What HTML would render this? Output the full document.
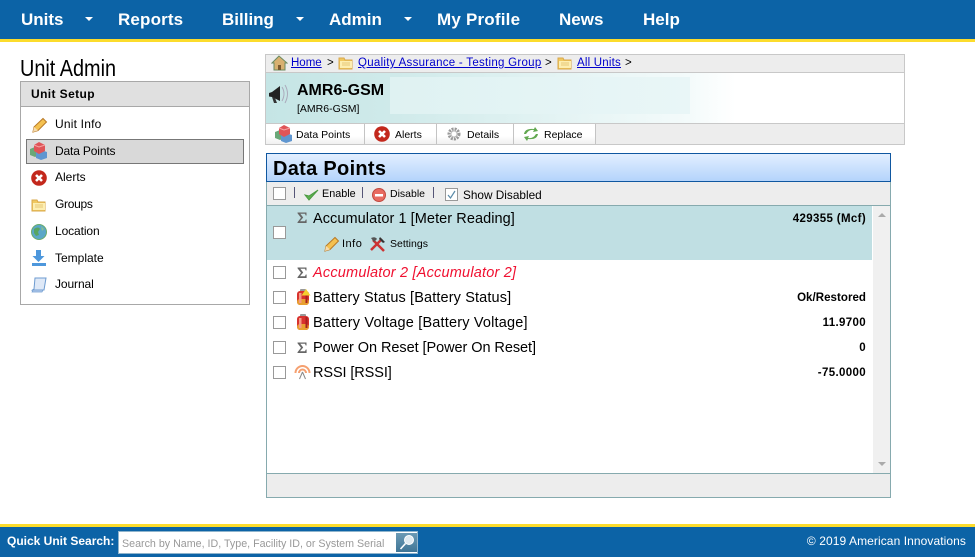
<!DOCTYPE html>
<html><head><meta charset="utf-8"><title>Unit Admin</title>
<style>
html,body{margin:0;padding:0;background:#fff}
#p{position:relative;width:975px;height:557px;overflow:hidden;font-family:"Liberation Sans",sans-serif;color:#000;background:#fff}
#p div,#p span.t,#p svg,#p a{position:absolute}
.t{white-space:nowrap;display:block}
.nav{color:#fff;font-weight:bold;font-size:17px;top:10px;line-height:20px}
.car{width:0;height:0;border-left:4px solid transparent;border-right:4px solid transparent;border-top:4px solid #fff;top:17px}
.side{font-size:12px;left:55px;line-height:14px}
.box{box-sizing:border-box}
.cb{width:13px;height:13px;box-sizing:border-box;border:1px solid #999;background:#fff;left:273px}
.name{font-size:14.5px;left:313px;line-height:18px}
.val{font-size:11.5px;font-weight:bold;line-height:14px;right:109px;letter-spacing:.35px}
a{color:#00c;text-decoration:underline;font-size:11.5px;line-height:14px;white-space:nowrap}
.tab{font-size:10.5px;line-height:14px;top:127px}
.sep{width:1px;background:#c4c4c4;top:124px;height:20px}
</style></head><body><div id="p">

<svg width="0" height="0" style="position:absolute"><defs>
<g id="folder"><path d="M1 3h5l1 2h7v9H1z" fill="#f0c860" stroke="#d9a84a"/><path d="M2 6h12v7H2z" fill="#fdeeb0"/><path d="M4 8h8M4 10h8" stroke="#e8c878" stroke-width="1"/></g>
<g id="x"><circle cx="8" cy="8" r="7.8" fill="#c3281c"/><path d="M5 5l6 6M11 5l-6 6" stroke="#fff" stroke-width="2.6"/></g>
<g id="cubes"><path d="M0 7l5-2 5 2v6l-5 2-5-2z" fill="#6aa878"/><path d="M6 10l5-2 6 2v6l-6 2-5-2z" fill="#5f96d0"/><path d="M4 3l5-3 6 3v6l-6 3-5-3z" fill="#e05558"/><path d="M4 3l5 2 6-2" fill="none" stroke="#f5a5a5"/></g>
<g id="pencil"><path d="M2 15l1-5L12 1.500l3.500 3.500L7 13.500z" fill="#f4c150" stroke="#b87a28" stroke-width="1"/><path d="M2 15l1-5 4 3.500z" fill="#f5dcb0"/></g>
<g id="sigma"><path d="M.5 .5h9v3H8.700L8 1.800H3.300L6.200 5.500 3 9.300h5L8.800 7.500h.8V11H.5v-.8L4 5.800.5 1.300z" fill="#666"/></g>
<g id="batt"><rect x="4" y="0" width="6" height="3" rx="1" fill="#999"/><rect x="1" y="2" width="12" height="14" rx="3" fill="#d8322e"/><rect x="1" y="10" width="12" height="6" rx="3" fill="#e8a030"/><rect x="3" y="4" width="2.500" height="10" fill="#f59a88"/><rect x="9.500" y="3" width="2" height="11" fill="#a82020"/></g>
</defs></svg>

<!-- header -->
<div style="left:0;top:0;width:975px;height:39px;background:#0c63a6"></div>
<div style="left:0;top:39px;width:975px;height:3px;background:#fcdc2c"></div>
<span class="t nav" style="left:21px">Units</span><div class="car" style="left:85px"></div>
<span class="t nav" style="left:118px;letter-spacing:.15px">Reports</span>
<span class="t nav" style="left:222px">Billing</span><div class="car" style="left:296px"></div>
<span class="t nav" style="left:329px">Admin</span><div class="car" style="left:404px"></div>
<span class="t nav" style="left:437px;letter-spacing:.2px">My Profile</span>
<span class="t nav" style="left:559px">News</span>
<span class="t nav" style="left:643px">Help</span>

<!-- left -->
<span class="t" style="left:20px;top:55px;font-size:23.5px;line-height:26px;transform:scaleX(.845);transform-origin:left">Unit Admin</span>
<div class="box" style="left:20px;top:81px;width:230px;height:224px;border:1px solid #a8a8a8;background:#fff"></div>
<div class="box" style="left:20px;top:81px;width:230px;height:26px;border:1px solid #a8a8a8;background:#e0e0e0"></div>
<span class="t" style="left:31px;top:87px;font-size:12px;font-weight:bold;line-height:15px;letter-spacing:.4px">Unit Setup</span>
<div class="box" style="left:26px;top:139px;width:218px;height:25px;border:1px solid #777;background:#d9d9d9"></div>
<svg style="left:31px;top:117px" width="17" height="16"><use href="#pencil"/></svg>
<svg style="left:30px;top:142px" width="18" height="19"><use href="#cubes"/></svg>
<svg style="left:31px;top:170px" width="16" height="16"><use href="#x"/></svg>
<svg style="left:31px;top:197px" width="16" height="16"><use href="#folder"/></svg>
<svg style="left:31px;top:224px" width="16" height="16"><circle cx="8" cy="8" r="7.500" fill="#5aa7c8" stroke="#6aab6a"/><path d="M3 5c3-2 5-2 6 0l-2 3 1 3-3 1-2-3z" fill="#58a560"/><path d="M10 2l3 3-2 2z" fill="#8cc08c"/></svg>
<svg style="left:31px;top:250px" width="16" height="16"><path d="M5 0h5v6h3.500L7.500 12 1.500 6H5z" fill="#4d97dc"/><rect x="1" y="13" width="14" height="3" fill="#4d97dc"/></svg>
<svg style="left:31px;top:277px" width="16" height="16"><path d="M4 1h11l-2 12H1.500L3 12z" fill="#dfe9f7" stroke="#6d9bd0"/><path d="M1 15h10l1-2H2z" fill="#b7cdec" stroke="#6d9bd0" stroke-width=".7"/></svg>
<span class="t side" style="top:117px;letter-spacing:.2px">Unit Info</span>
<span class="t side" style="top:144px;letter-spacing:-.15px">Data Points</span>
<span class="t side" style="top:170px">Alerts</span>
<span class="t side" style="top:197px;letter-spacing:-.3px">Groups</span>
<span class="t side" style="top:224px;letter-spacing:-.1px">Location</span>
<span class="t side" style="top:251px">Template</span>
<span class="t side" style="top:277px;letter-spacing:-.1px">Journal</span>

<!-- unit header -->
<div class="box" style="left:265px;top:54px;width:640px;height:91px;border:1px solid #c8c8c8;background:#fff"></div>
<div class="box" style="left:266px;top:55px;width:638px;height:18px;background:#ededed;border-bottom:1px solid #c8c8c8"></div>
<div style="left:266px;top:73px;width:638px;height:50px;background:linear-gradient(90deg,#c5e5e5 0,#cfeaea 124px,#f4fbfb 424px,#fff 470px)"></div>
<div style="left:390px;top:77px;width:300px;height:37px;background:linear-gradient(90deg,#dff2f2,#e9f6f7)"></div>
<div class="box" style="left:266px;top:123px;width:638px;height:21px;background:#ededed;border-top:1px solid #c8c8c8"></div>
<svg style="left:271px;top:55px" width="17" height="16"><path d="M8 1L1 8h2v7h11V8h2z" fill="#d8b070" stroke="#6a8a60"/><rect x="7" y="10" width="3" height="5" fill="#7a5a30"/></svg>
<a style="left:291px;top:56px">Home</a>
<span class="t" style="left:327px;top:56px;font-size:11.5px;line-height:14px">&gt;</span>
<svg style="left:338px;top:55px" width="16" height="16"><use href="#folder"/></svg>
<a style="left:358px;top:56px;letter-spacing:.28px">Quality Assurance - Testing Group</a>
<span class="t" style="left:545px;top:56px;font-size:11.5px;line-height:14px">&gt;</span>
<svg style="left:557px;top:55px" width="16" height="16"><use href="#folder"/></svg>
<a style="left:577px;top:56px;letter-spacing:.2px">All Units</a>
<span class="t" style="left:625px;top:56px;font-size:11.5px;line-height:14px">&gt;</span>
<svg style="left:268px;top:82px" width="24" height="26"><path d="M1 11l3-1 8-6v15l-8-4-3-.5z" fill="#222"/><path d="M4 15l2 6h3l-2-5z" fill="#333"/><path d="M14 5q4 6.500 0 14M17 3q5 8.500 0 18" fill="none" stroke="#aab" stroke-width="1"/></svg>
<span class="t" style="left:297px;top:81px;font-size:16px;font-weight:bold;line-height:19px">AMR6-GSM</span>
<span class="t" style="left:297px;top:102px;font-size:10.5px;line-height:14px">[AMR6-GSM]</span>

<div style="left:266px;top:124px;width:329px;height:20px;background:linear-gradient(#fff 60%,#f0f0f0)"></div>
<div class="sep" style="left:364px"></div><div class="sep" style="left:436px"></div><div class="sep" style="left:513px"></div><div class="sep" style="left:595px"></div>
<svg style="left:275px;top:125px" width="18" height="19"><use href="#cubes"/></svg>
<span class="t tab" style="left:296px;top:128px">Data Points</span>
<svg style="left:374px;top:126px" width="16" height="16"><use href="#x"/></svg>
<span class="t tab" style="left:395px;top:128px">Alerts</span>
<svg style="left:447px;top:127px" width="14" height="14"><circle cx="7" cy="7" r="5" fill="none" stroke="#999" stroke-width="3" stroke-dasharray="2 1"/><circle cx="7" cy="7" r="3" fill="none" stroke="#bbb"/></svg>
<span class="t tab" style="left:467px;top:128px">Details</span>
<svg style="left:523px;top:126px" width="16" height="16"><path d="M1 8q1-6 10-5l1-2 3 4-5 1 1-2q-5-1-8 4z" fill="#62a850"/><path d="M15 8q-1 6-10 5l-1 2-3-4 5-1-1 2q5 1 8-4z" fill="#62a850"/></svg>
<span class="t tab" style="left:544px;top:128px">Replace</span>

<!-- data points panel -->
<div class="box" style="left:266px;top:153px;width:625px;height:345px;border:1px solid #86aaae;background:#fff"></div>
<div class="box" style="left:266px;top:153px;width:625px;height:29px;border:1px solid #0f57a0;background:linear-gradient(#e2efff,#b4d4fb)"></div>
<span class="t" style="left:273px;top:158px;font-size:20px;font-weight:bold;line-height:22px;letter-spacing:.3px">Data Points</span>
<div style="left:267px;top:182px;width:623px;height:23px;background:#ededed;border-bottom:1px solid #86aaae"></div>
<div class="cb" style="top:187px"></div>
<div style="left:294px;top:187px;width:1px;height:11px;background:#557"></div>
<svg style="left:304px;top:188px" width="15" height="14"><path d="M1 7l4 5L14 2 5 8z" fill="#5cb050" stroke="#4a9a40"/></svg>
<span class="t" style="left:322px;top:187px;font-size:10.8px;line-height:14px">Enable</span>
<div style="left:362px;top:187px;width:1px;height:11px;background:#557"></div>
<svg style="left:372px;top:188px" width="14" height="14"><circle cx="7" cy="7" r="6.500" fill="#e86a60" stroke="#c04a40"/><rect x="3" y="6" width="8" height="2.500" fill="#fff"/></svg>
<span class="t" style="left:390px;top:187px;font-size:10.5px;line-height:14px">Disable</span>
<div style="left:433px;top:187px;width:1px;height:11px;background:#557"></div>
<div class="cb" style="left:445px;top:188px"></div>
<svg style="left:445px;top:188px" width="13" height="13"><path d="M3 7l2.500 3L10 3" fill="none" stroke="#5a8aa8" stroke-width="1.200"/></svg>
<span class="t" style="left:463px;top:188px;font-size:11.8px;line-height:14px">Show Disabled</span>

<!-- rows -->
<div style="left:267px;top:206px;width:605px;height:54px;background:#c0dfe3"></div>
<div style="left:873px;top:206px;width:17px;height:267px;background:#f0f0f0"></div>
<div style="left:878px;top:213px;width:0;height:0;border-left:4px solid transparent;border-right:4px solid transparent;border-bottom:4px solid #aaa"></div>
<div style="left:878px;top:462px;width:0;height:0;border-left:4px solid transparent;border-right:4px solid transparent;border-top:4px solid #aaa"></div>
<div style="left:267px;top:473px;width:623px;height:24px;background:#ededed;border-top:1px solid #86aaae;box-sizing:border-box"></div>

<div class="cb" style="top:226px"></div>
<svg style="left:297px;top:212px" width="10" height="11"><use href="#sigma"/></svg>
<span class="t name" style="top:210px;letter-spacing:.07px">Accumulator 1 [Meter Reading]</span>
<span class="t val" style="top:212px">429355 (Mcf)</span>
<svg style="left:323px;top:236px" width="17" height="16"><use href="#pencil"/></svg>
<span class="t" style="left:342px;top:237px;font-size:11px;line-height:14px;letter-spacing:.5px">Info</span>
<svg style="left:369px;top:236px" width="17" height="16"><path d="M2 14L13 3M15 15L4 4" stroke="#c33" stroke-width="2.500"/><path d="M2 2q4-2 6 1L5 6z" fill="#555"/><path d="M11 1l5 5-2 1-4-4z" fill="#333"/></svg>
<span class="t" style="left:390px;top:237px;font-size:10.5px;line-height:14px">Settings</span>

<div class="cb" style="top:266px"></div>
<svg style="left:297px;top:267px" width="10" height="11"><use href="#sigma"/></svg>
<span class="t name" style="top:264px;color:#f01030;font-style:italic;letter-spacing:.2px">Accumulator 2 [Accumulator 2]</span>

<div class="cb" style="top:291px"></div>
<svg style="left:296px;top:289px" width="15" height="16"><use href="#batt"/><path d="M10 0l4.500 6.500H5.500z" fill="#f3d030"/></svg>
<span class="t name" style="top:289px;letter-spacing:.13px">Battery Status [Battery Status]</span>
<span class="t val" style="top:291px;letter-spacing:.05px">Ok/Restored</span>

<div class="cb" style="top:316px"></div>
<svg style="left:296px;top:314px" width="15" height="16"><use href="#batt"/></svg>
<span class="t name" style="top:314px;letter-spacing:.18px">Battery Voltage [Battery Voltage]</span>
<span class="t val" style="top:316px">11.9700</span>

<div class="cb" style="top:341px"></div>
<svg style="left:297px;top:342px" width="10" height="11"><use href="#sigma"/></svg>
<span class="t name" style="top:339px;letter-spacing:-.06px">Power On Reset [Power On Reset]</span>
<span class="t val" style="top:341px">0</span>

<div class="cb" style="top:366px"></div>
<svg style="left:294px;top:364px" width="17" height="16"><path d="M1.500 9a7 7 0 0 1 14 0" fill="none" stroke="#f5a070" stroke-width="2"/><path d="M5 9a3.500 3.500 0 0 1 7 0" fill="none" stroke="#f5a070" stroke-width="2"/><path d="M8.500 8L5.500 15M8.500 8l3 7" stroke="#888"/></svg>
<span class="t name" style="top:364px;letter-spacing:-.1px">RSSI [RSSI]</span>
<span class="t val" style="top:366px">-75.0000</span>

<!-- footer -->
<div style="left:0;top:524px;width:975px;height:3px;background:#fcdc2c"></div>
<div style="left:0;top:527px;width:975px;height:30px;background:#0c63a6"></div>
<span class="t" style="left:7px;top:534px;color:#fff;font-size:12px;font-weight:bold;line-height:15px">Quick Unit Search:</span>
<div class="box" style="left:118px;top:531px;width:300px;height:23px;border:1px solid #8fb4cc;background:#fff"></div>
<span class="t" style="left:122px;top:537px;font-size:10.7px;line-height:14px;color:#999">Search by Name, ID, Type, Facility ID, or System Serial</span>
<div style="left:396px;top:533px;width:21px;height:19px;background:linear-gradient(#6b9ab5,#3f7596)"></div>
<svg style="left:397px;top:533px" width="20" height="19"><circle cx="12" cy="7" r="4.500" fill="#dfeaf0" stroke="#fff"/><path d="M8.500 10.500l-5 5.500" stroke="#fff" stroke-width="1.600"/></svg>
<span class="t" style="right:9px;top:534px;color:#fff;font-size:12px;line-height:15px;letter-spacing:.08px">© 2019 American Innovations</span>
</div></body></html>
